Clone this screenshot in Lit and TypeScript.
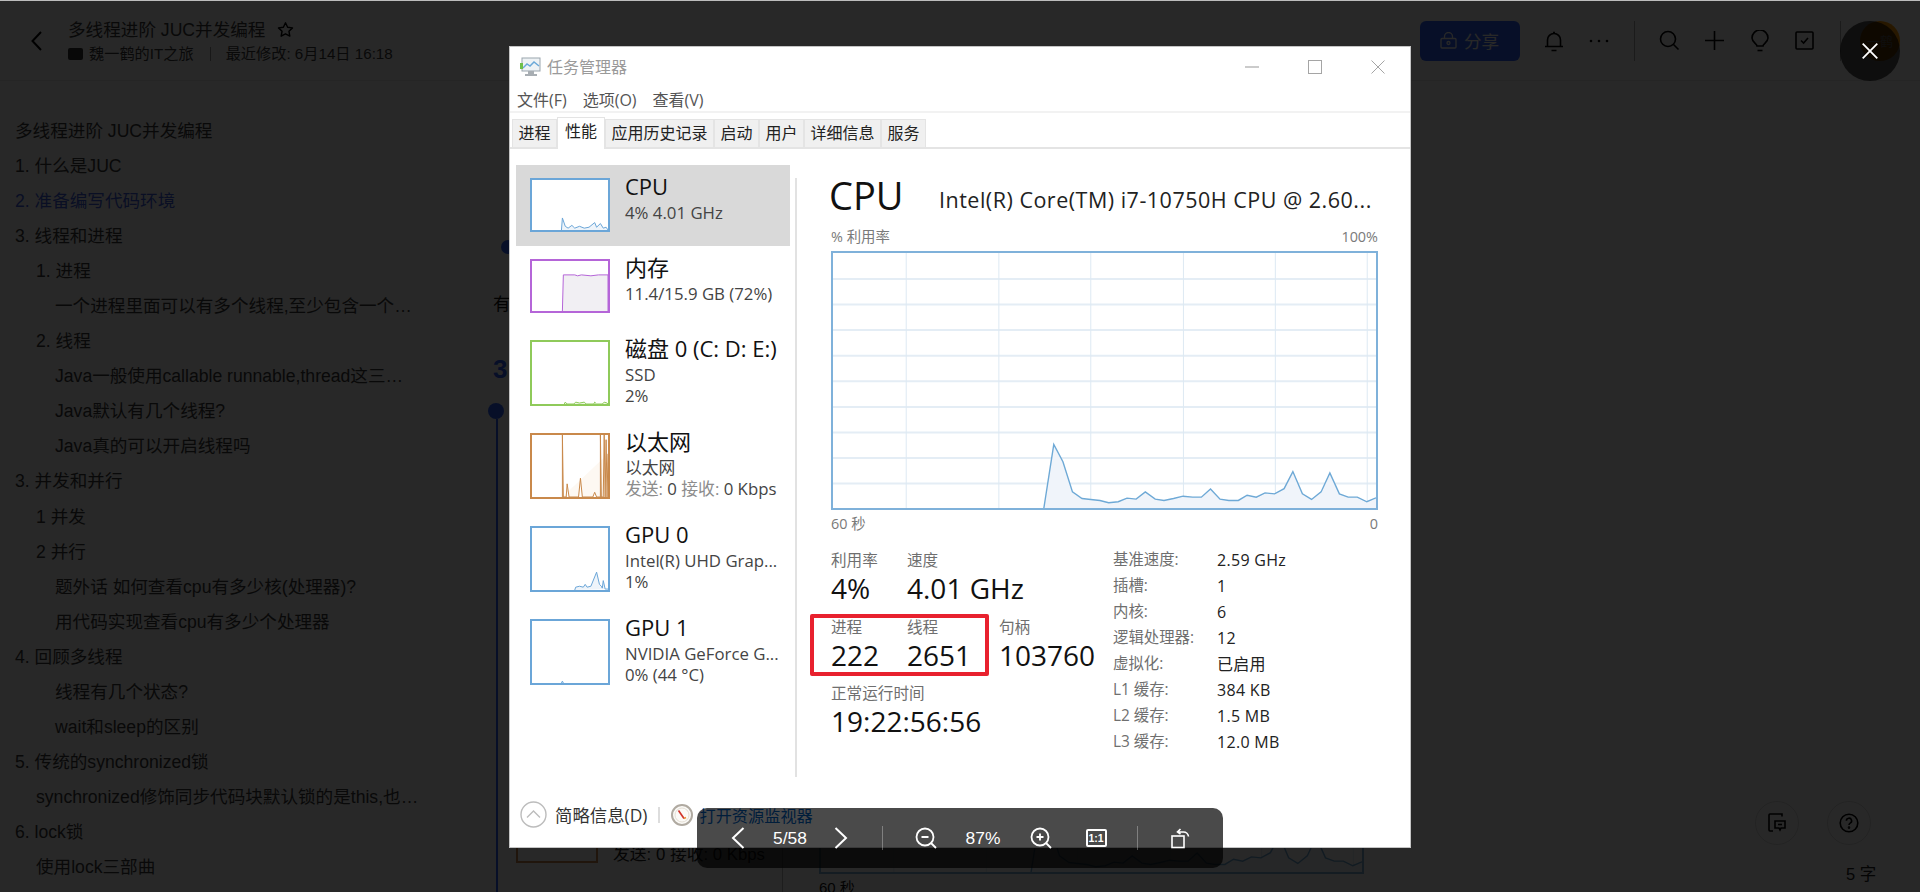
import { LitElement, html, svg, css } from "lit";
import type { TemplateResult } from "lit";
import { customElement } from "lit/decorators.js";

type TocRow = { level: 0 | 1 | 2; text: string; active?: boolean };

const TOC: TocRow[] = [
  { level: 0, text: "多线程进阶 JUC并发编程" },
  { level: 0, text: "1. 什么是JUC" },
  { level: 0, text: "2. 准备编写代码环境", active: true },
  { level: 0, text: "3. 线程和进程" },
  { level: 1, text: "1. 进程" },
  { level: 2, text: "一个进程里面可以有多个线程,至少包含一个线程的说法" },
  { level: 1, text: "2. 线程" },
  { level: 2, text: "Java一般使用callable runnable,thread这三种方式实现" },
  { level: 2, text: "Java默认有几个线程?" },
  { level: 2, text: "Java真的可以开启线程吗" },
  { level: 0, text: "3. 并发和并行" },
  { level: 1, text: "1 并发" },
  { level: 1, text: "2 并行" },
  { level: 2, text: "题外话 如何查看cpu有多少核(处理器)?" },
  { level: 2, text: "用代码实现查看cpu有多少个处理器" },
  { level: 0, text: "4. 回顾多线程" },
  { level: 2, text: "线程有几个状态?" },
  { level: 2, text: "wait和sleep的区别" },
  { level: 0, text: "5. 传统的synchronized锁" },
  { level: 1, text: "synchronized修饰同步代码块默认锁的是this,也就是当前对象实例" },
  { level: 0, text: "6. lock锁" },
  { level: 1, text: "使用lock三部曲" },
];

type Perf = {
  title: string;
  lines: (string | TemplateResult)[];
  color: string;
  fill: string;
  tall: boolean;
  points: string;
  selected?: boolean;
};

const PERF: Perf[] = [
  {
    title: "CPU",
    lines: ["4% 4.01 GHz"],
    color: "#6ba6d8",
    fill: "#eef4fa",
    tall: false,
    points: "31,54 32,41 35,50 38,52 42,49 45,52 50,50 55,52 60,51 66,46 68,51 72,47 75,52 78,51 80,54",
    selected: true,
  },
  {
    title: "内存",
    lines: ["11.4/15.9 GB (72%)"],
    color: "#b565d8",
    fill: "#f1eff3",
    tall: false,
    points: "32,54 33,15 45,15 48,16 52,15 62,16 70,15 80,15 80,54",
  },
  {
    title: "磁盘 0 (C: D: E:)",
    lines: ["SSD", "2%"],
    color: "#8fca5a",
    fill: "#eef7e4",
    tall: true,
    points: "34,66 35,64 37,66 44,66 46,64 50,65 55,64 57,66 65,66 66,64 68,66 74,66 76,64 79,65 80,66",
  },
  {
    title: "以太网",
    lines: ["以太网", html`<span class="dim">发送:</span> 0 <span class="dim">接收:</span> 0 Kbps`],
    color: "#c9894b",
    fill: "#fdf8f2",
    tall: true,
    points: "32,66 32,0 33,66 36,66 37,52 39,66 49,66 51,46 53,66 64,66 66,61 68,66 72,66 72,0 73,66 75,66 76,0 77,66 78,5 79,66 80,20",
  },
  {
    title: "GPU 0",
    lines: ["Intel(R) UHD Grap...", "1%"],
    color: "#6ba6d8",
    fill: "#eef4fa",
    tall: true,
    points: "45,66 46,63 50,62 54,63 56,60 58,63 62,62 68,47 71,60 73,62 74,64 75,56 77,65 80,65",
  },
  {
    title: "GPU 1",
    lines: ["NVIDIA GeForce G...", "0% (44 °C)"],
    color: "#6ba6d8",
    fill: "#eef4fa",
    tall: true,
    points: "31,66 32,64 33,66",
  },
];

const TABS = ["进程", "性能", "应用历史记录", "启动", "用户", "详细信息", "服务"];

const SPECS: [string, string][] = [
  ["基准速度:", "2.59 GHz"],
  ["插槽:", "1"],
  ["内核:", "6"],
  ["逻辑处理器:", "12"],
  ["虚拟化:", "已启用"],
  ["L1 缓存:", "384 KB"],
  ["L2 缓存:", "1.5 MB"],
  ["L3 缓存:", "12.0 MB"],
];

// traced from the big graph, in crop pixels
const CPU_LINE =
  "610,1049 636,855 660,908 685,1000 710,1020 733,1023 757,1026 780,1033 805,1030 828,1019 852,1022 876,1000 902,1022 925,1026 950,1020 975,1013 1000,1016 1023,1016 1047,991 1072,1022 1095,1026 1120,1026 1143,1010 1167,1016 1190,1003 1215,1006 1240,990 1263,938 1288,1006 1312,1023 1337,1000 1360,942 1385,1006 1408,1016 1432,1016 1457,1030 1481,1018";

const H_LINES = [351, 429, 507, 585, 663, 741, 819, 897, 974];
const V_LINES = [249, 492, 733, 976, 1217, 1458];

function cpuGraph() {
  return html`<svg class="graph-svg" viewBox="57 272 1424 777" preserveAspectRatio="none">
    ${H_LINES.map(
      (y) => svg`<line x1="57" x2="1481" y1=${y} y2=${y} stroke="#e4edf5" stroke-width="2" vector-effect="non-scaling-stroke"></line>`
    )}
    ${V_LINES.map(
      (x) => svg`<line x1=${x} x2=${x} y1="272" y2="1049" stroke="#dde9f3" stroke-width="1" vector-effect="non-scaling-stroke"></line>`
    )}
    <polygon points="${CPU_LINE} 1481,1049" fill="#f0f4fa"></polygon>
    <polyline points=${CPU_LINE} fill="none" stroke="#6ea9d6" stroke-width="1.4" vector-effect="non-scaling-stroke"></polyline>
  </svg>`;
}

@customElement("app-root")
export class AppRoot extends LitElement {
  static override styles = css`
    :host {
      display: block;
      position: relative;
      width: 1920px;
      height: 892px;
      overflow: hidden;
      background: #fff;
      font-family: "Liberation Sans", "Noto Sans CJK SC", sans-serif;
      color: #3a3a3a;
    }

    /* page behind the lightbox */
    .page {
      display: flex;
      flex-direction: column;
      height: 892px;
    }
    .header {
      flex: none;
      box-sizing: border-box;
      height: 81px;
      border-bottom: 1px solid #e8e8e8;
      display: flex;
      align-items: center;
      padding: 0 20px 0 31px;
    }
    .back {
      width: 11px;
      height: 20px;
      margin: 2px 26px 0 0;
    }
    .doc-title {
      display: flex;
      align-items: center;
      font-size: 17.6px;
      line-height: 24px;
      gap: 12px;
      margin-top: 1px;
    }
    .doc-meta {
      display: flex;
      align-items: center;
      font-size: 15.2px;
      line-height: 20px;
      margin-top: 2px;
    }
    .folder {
      width: 15px;
      height: 12px;
      background: #333;
      border-radius: 2px;
      margin-right: 6px;
    }
    .meta-sep {
      width: 1px;
      height: 14px;
      background: #999;
      margin: 0 15px 0 16px;
    }
    .head-right {
      margin: 1px 0 0 auto;
      display: flex;
      align-items: center;
    }
    .share {
      width: 100px;
      height: 40px;
      border-radius: 6px;
      background: #2d62ff;
      color: #fff;
      display: flex;
      align-items: center;
      justify-content: center;
      gap: 7px;
      font-size: 17.6px;
      margin-right: 11.5px;
    }
    .ic {
      width: 45px;
      display: flex;
      justify-content: center;
      color: #000;
    }
    .head-sep {
      width: 1px;
      height: 40px;
      background: #aaa;
      margin: 0 12.5px;
    }
    .avatar {
      width: 40px;
      height: 40px;
      border-radius: 50%;
      background: #ff9a00;
      margin-left: 7px;
      color: #fff;
      font-size: 13px;
      display: flex;
      align-items: center;
      justify-content: center;
    }

    .body {
      flex: 1;
      min-height: 0;
      display: flex;
    }
    .toc {
      flex: none;
      width: 487px;
      box-sizing: border-box;
      padding-top: 33px;
    }
    .toc-row {
      width: 419px;
      box-sizing: border-box;
      height: 35.05px;
      line-height: 35px;
      font-size: 17.6px;
      white-space: nowrap;
      overflow: hidden;
      text-overflow: ellipsis;
    }
    .l0 {
      padding-left: 15px;
    }
    .l1 {
      padding-left: 36px;
    }
    .l2 {
      padding-left: 55px;
    }
    .toc-row.active {
      color: #3f63e6;
    }

    .doc {
      flex: 1;
      min-width: 0;
      display: flex;
      flex-direction: column;
      padding-left: 6px;
    }
    .dot-small {
      width: 14px;
      height: 14px;
      margin: 159px 0 0 8px;
      border-radius: 50%;
      background: #2d62ff;
    }
    .para {
      font-size: 17.6px;
      line-height: 24px;
      margin-top: 38px;
      color: #111;
    }
    .h3 {
      font-size: 26px;
      font-weight: 700;
      line-height: 30px;
      margin-top: 38px;
      color: #2d62ff;
    }
    .dot-big {
      width: 16px;
      height: 16px;
      border-radius: 50%;
      background: #2d62ff;
      margin: 19px 0 0 -5px;
    }
    .timeline {
      flex: 1;
      min-height: 0;
      display: flex;
      margin-left: 3px;
    }
    .rail {
      flex: none;
      width: 2px;
      background: #2d62ff;
    }
    .figure {
      display: flex;
      align-items: flex-end;
      margin-left: 18px;
      color: #111;
    }
    .fig-thumb {
      flex: none;
      box-sizing: border-box;
      width: 82px;
      height: 60px;
      border: 2px solid #c9894b;
      margin-bottom: 29px;
    }
    .fig-text {
      flex: none;
      width: 154px;
      margin: 0 0 27px 15px;
      font-size: 16.8px;
      line-height: 20px;
      white-space: nowrap;
      color: #222;
    }
    .fig-sep {
      flex: none;
      width: 1px;
      height: 280px;
      margin-left: 15px;
      background: #bbb;
    }
    .fig-chart {
      flex: none;
      width: 545px;
      margin: 0 0 -5px 36px;
    }
    .fig-chart .graph {
      height: 259px;
    }
    .fig-axis {
      font-size: 15px;
      line-height: 18px;
      margin-top: 5px;
    }

    .fab {
      position: absolute;
      top: 801px;
      width: 44px;
      height: 44px;
      box-sizing: border-box;
      border-radius: 50%;
      border: 1px solid #ddd;
      display: flex;
      align-items: center;
      justify-content: center;
      color: #000;
    }
    .fab.a {
      left: 1755px;
    }
    .fab.b {
      left: 1827px;
    }
    .word-count {
      position: absolute;
      left: 1846px;
      top: 864px;
      font-size: 16.5px;
      line-height: 20px;
      color: #222;
    }

    /* lightbox */
    .mask {
      position: absolute;
      inset: 0;
      background: rgba(0, 0, 0, 0.843);
      display: flex;
      align-items: center;
      justify-content: center;
      padding-top: 2px;
      box-sizing: border-box;
    }
    .edge {
      position: absolute;
      left: 0;
      right: 0;
      top: 0;
      height: 1px;
      background: #bdbdbd;
    }
    .close {
      position: absolute;
      left: 1840px;
      top: 21px;
      width: 60px;
      height: 60px;
      border-radius: 50%;
      background: rgba(0, 0, 0, 0.65);
      display: flex;
      align-items: center;
      justify-content: center;
    }

    .toolbar {
      position: absolute;
      left: 697px;
      top: 808px;
      width: 526px;
      height: 60px;
      box-sizing: border-box;
      padding-left: 21px;
      border-radius: 10px;
      background: rgba(0, 0, 0, 0.71);
      color: #fff;
      display: flex;
      align-items: center;
      font-size: 17.4px;
    }
    .t {
      flex: none;
      display: flex;
      align-items: center;
      justify-content: center;
    }
    .t40 {
      width: 40px;
    }
    .t64 {
      width: 64px;
    }
    .t38 {
      width: 38px;
    }
    .t44 {
      width: 44px;
    }
    .t70 {
      width: 70px;
    }
    .t46 {
      width: 46px;
    }
    .t-sep {
      flex: none;
      width: 1px;
      height: 24px;
      background: rgba(255, 255, 255, 0.3);
      margin: 0 21px 0 22px;
    }
    .t-sep.b {
      margin: 0 21px 0 9px;
    }
    .one-one {
      box-sizing: border-box;
      width: 21px;
      height: 18px;
      border: 2px solid #fff;
      border-radius: 2px;
      font-size: 10.5px;
      font-weight: 700;
      line-height: 14px;
      text-align: center;
    }

    /* task manager screenshot */
    .win {
      flex: none;
      box-sizing: border-box;
      width: 902px;
      height: 802px;
      border: 1px solid #c4c4c4;
      background: #fff;
      display: flex;
      flex-direction: column;
      font-family: "Open Sans", "Noto Sans CJK SC", sans-serif;
      color: #222;
      font-size: 16px;
    }
    .titlebar {
      flex: none;
      height: 39px;
      display: flex;
      align-items: center;
      padding-left: 10px;
      gap: 6px;
      color: #9a9a9a;
      line-height: 20px;
    }
    .win-ctl {
      margin-left: auto;
      display: flex;
      margin-right: 1px;
    }
    .win-ctl div {
      width: 63px;
      display: flex;
      justify-content: center;
      align-items: center;
    }
    .menu {
      flex: none;
      height: 27px;
      box-sizing: border-box;
      border-bottom: 2px solid #f2f2f2;
      display: flex;
      gap: 16px;
      padding: 1px 0 0 7px;
      line-height: 26px;
      font-size: 16px;
      color: #555;
    }
    .tabs {
      flex: none;
      height: 36px;
      box-sizing: border-box;
      border-bottom: 2px solid #e4e4e4;
      display: flex;
      align-items: flex-end;
      padding-left: 2px;
    }
    .tab {
      height: 27px;
      line-height: 27px;
      padding: 0 5.5px;
      background: #f0f0f0;
      border: 1px solid #e4e4e4;
      border-bottom: none;
      white-space: nowrap;
      font-size: 16px;
    }
    .tab.on {
      height: 31px;
      background: #fff;
      margin-bottom: -2px;
      padding: 0 7px;
    }
    .main {
      flex: 1;
      min-height: 0;
      display: flex;
    }
    .list {
      flex: none;
      width: 285px;
      box-sizing: border-box;
      padding: 16px 5px 0 6px;
    }
    .item {
      display: flex;
      gap: 15px;
      padding: 13px 0 14px 14px;
    }
    .item.sel {
      background: #d9d9d9;
    }
    .thumb {
      flex: none;
      box-sizing: border-box;
      width: 80px;
      height: 54px;
      border: 2px solid;
      background: #fff;
    }
    .thumb.tall {
      height: 66px;
    }
    .thumb svg {
      display: block;
      width: 100%;
      height: 100%;
    }
    .item-text {
      margin-top: -3px;
      white-space: nowrap;
      min-width: 0;
    }
    .item-title {
      font-size: 22px;
      line-height: 22px;
      margin-bottom: 5px;
      color: #111;
    }
    .item-sub {
      font-size: 16.8px;
      line-height: 21px;
      color: #444;
    }
    .dim {
      color: #8c8c8c;
    }
    .list-sep {
      flex: none;
      width: 2px;
      margin: 29px 0 5px;
      background: #e2e2e2;
    }
    .panel {
      flex: 1;
      min-width: 0;
      box-sizing: border-box;
      padding: 21px 32px 0 34px;
    }
    .head-row {
      display: flex;
      height: 50px;
      white-space: nowrap;
    }
    .cpu {
      font-size: 38px;
      line-height: 50px;
      width: 110px;
      margin-left: -2px;
      color: #111;
    }
    .model {
      font-size: 21.5px;
      letter-spacing: 0.5px;
      line-height: 50px;
      margin-top: 5px;
      color: #222;
    }
    .axis {
      display: flex;
      justify-content: space-between;
      font-size: 14.4px;
      line-height: 20px;
      color: #7a7a7a;
    }
    .axis.top {
      margin-top: 7px;
    }
    .axis.bottom {
      margin-top: 4px;
    }
    .graph {
      box-sizing: border-box;
      height: 259px;
      margin-top: 4px;
      border: 2px solid #7fb1da;
      background: #fff;
    }
    .graph-svg {
      display: block;
      width: 100%;
      height: 100%;
    }
    .stats {
      display: flex;
      margin-top: 16px;
    }
    .stats-left {
      position: relative;
      flex: none;
      width: 282px;
    }
    .s-row {
      display: flex;
      margin-bottom: 10.5px;
    }
    .c76 {
      width: 76px;
    }
    .c92 {
      width: 92px;
    }
    .s-label {
      font-size: 15.6px;
      line-height: 20px;
      color: #6f6f6f;
      white-space: nowrap;
    }
    .s-value {
      font-size: 28px;
      line-height: 36px;
      color: #111;
      white-space: nowrap;
    }
    .redbox {
      position: absolute;
      left: -21px;
      top: 64px;
      width: 179px;
      height: 62px;
      box-sizing: border-box;
      border: 4px solid #e8212e;
      border-radius: 2px;
    }
    .specs {
      display: grid;
      grid-template-columns: 104px auto;
      grid-auto-rows: 26px;
      line-height: 26px;
      margin-top: -3px;
      font-size: 15.4px;
      white-space: nowrap;
    }
    .specs .k {
      color: #6f6f6f;
    }
    .specs .v {
      color: #222;
      font-size: 16px;
      letter-spacing: 0.3px;
    }
    .foot {
      flex: none;
      height: 65px;
      display: flex;
      align-items: center;
      padding-left: 10px;
    }
    .foot-label {
      font-size: 17.4px;
      margin-left: 8px;
      color: #333;
      white-space: nowrap;
    }
    .foot-sep {
      width: 2px;
      height: 16px;
      background: #ddd;
      margin: 0 11px;
    }
    .foot-link {
      font-size: 16.2px;
      margin-left: 6px;
      color: #0066cc;
      white-space: nowrap;
    }
  `;

  private renderThumb(p: Perf) {
    const h = p.tall ? 66 : 54;
    return html`<div class="thumb ${p.tall ? "tall" : ""}" style="border-color:${p.color}">
      <svg viewBox="0 0 80 ${h}" preserveAspectRatio="none">
        <polygon points=${p.points} fill=${p.fill}></polygon>
        <polyline points=${p.points} fill="none" stroke=${p.color} stroke-width="1" vector-effect="non-scaling-stroke"></polyline>
      </svg>
    </div>`;
  }

  private renderHeader() {
    return html`<div class="header">
      <svg class="back" viewBox="0 0 11 20" fill="none" stroke="#000" stroke-width="2"><path d="M10 1 1.5 10 10 19" /></svg>
      <div>
        <div class="doc-title">
          多线程进阶 JUC并发编程
          <svg width="17" height="17" viewBox="0 0 24 24" fill="none" stroke="#000" stroke-width="2" stroke-linejoin="round"><path d="M12 2.5l3 6.3 6.9.9-5 4.8 1.2 6.9-6.1-3.3-6.1 3.3 1.2-6.9-5-4.8 6.9-.9z" /></svg>
        </div>
        <div class="doc-meta">
          <div class="folder"></div>
          魏一鹤的IT之旅
          <div class="meta-sep"></div>
          最近修改: 6月14日 16:18
        </div>
      </div>
      <div class="head-right">
        <div class="share">
          <svg width="17" height="17" viewBox="0 0 17 17" fill="none" stroke="#fff" stroke-width="1.3"><rect x="1" y="6.5" width="15" height="9.5" rx="1" /><path d="M4.5 6.5V4.5a4 4 0 0 1 8 0v2" /><circle cx="8.5" cy="11" r="1.5" /></svg>
          分享
        </div>
        <div class="ic"><svg width="22" height="22" viewBox="0 0 22 22" fill="none" stroke="currentColor" stroke-width="1.6"><path d="M2 16.5h18M4.5 16.5V10a6.5 6.5 0 0 1 13 0v6.5M8.5 20.5h5" /><path d="M10 2.5h2" /></svg></div>
        <div class="ic"><svg width="20" height="4" viewBox="0 0 20 4" fill="currentColor"><circle cx="2" cy="2" r="1.3" /><circle cx="10" cy="2" r="1.3" /><circle cx="18" cy="2" r="1.3" /></svg></div>
        <div class="head-sep"></div>
        <div class="ic"><svg width="21" height="21" viewBox="0 0 21 21" fill="none" stroke="currentColor" stroke-width="1.6"><circle cx="9" cy="9" r="7.5" /><path d="M14.5 14.5l5 5" /></svg></div>
        <div class="ic"><svg width="19" height="19" viewBox="0 0 19 19" fill="none" stroke="currentColor" stroke-width="1.6"><path d="M9.5 0v19M0 9.5h19" /></svg></div>
        <div class="ic"><svg width="18" height="22" viewBox="0 0 18 22" fill="none" stroke="currentColor" stroke-width="1.6"><path d="M6 16c0-2-5-4-5-8a8 8 0 0 1 16 0c0 4-5 6-5 8z" /><path d="M6.5 20.5h5" /></svg></div>
        <div class="ic"><svg width="19" height="19" viewBox="0 0 19 19" fill="none" stroke="currentColor" stroke-width="1.6"><rect x="1" y="1" width="17" height="17" rx="1" /><path d="M6 9.5l2.6 2.6L13 7" /></svg></div>
        <div class="head-sep"></div>
        <div class="avatar">一鹤</div>
      </div>
    </div>`;
  }

  private renderDoc() {
    return html`<div class="doc">
      <div class="dot-small"></div>
      <div class="para">有</div>
      <div class="h3">3</div>
      <div class="dot-big"></div>
      <div class="timeline">
        <div class="rail"></div>
        <div class="figure">
          <div class="fig-thumb"></div>
          <div class="fig-text">发送: 0 接收: 0 Kbps</div>
          <div class="fig-sep"></div>
          <div class="fig-chart">
            <div class="graph">${cpuGraph()}</div>
            <div class="fig-axis">60 秒</div>
          </div>
        </div>
      </div>
    </div>`;
  }

  private renderWindow() {
    return html`<div class="win">
      <div class="titlebar">
        <svg width="21" height="20" viewBox="0 0 21 20">
          <rect x="2" y="1" width="18" height="13" fill="#eef2f5" stroke="#9aa5ad" />
          <path d="M3 11l4-4 3 2 4-4 5 4" fill="none" stroke="#6aa8d8" stroke-width="1.4" />
          <rect x="0" y="6" width="3" height="6" fill="#6fbf4a" />
          <path d="M8 14h6v3h3v2H5v-2h3z" fill="#a8aeb3" />
        </svg>
        任务管理器
        <div class="win-ctl">
          <div><svg width="14" height="14" viewBox="0 0 14 14"><path d="M0 7h14" stroke="#b5b5b5" stroke-width="1.4" /></svg></div>
          <div><svg width="14" height="14" viewBox="0 0 14 14"><rect x=".5" y=".5" width="13" height="13" fill="none" stroke="#a5a5a5" /></svg></div>
          <div><svg width="14" height="14" viewBox="0 0 14 14"><path d="M.5.5l13 13M13.5.5l-13 13" stroke="#a5a5a5" /></svg></div>
        </div>
      </div>
      <div class="menu"><span>文件(F)</span><span>选项(O)</span><span>查看(V)</span></div>
      <div class="tabs">
        ${TABS.map((t, i) => html`<div class="tab ${i === 1 ? "on" : ""}">${t}</div>`)}
      </div>
      <div class="main">
        <div class="list">
          ${PERF.map(
            (p) => html`<div class="item ${p.selected ? "sel" : ""}">
              ${this.renderThumb(p)}
              <div class="item-text">
                <div class="item-title">${p.title}</div>
                ${p.lines.map((l) => html`<div class="item-sub">${l}</div>`)}
              </div>
            </div>`
          )}
        </div>
        <div class="list-sep"></div>
        <div class="panel">
          <div class="head-row">
            <div class="cpu">CPU</div>
            <div class="model">Intel(R) Core(TM) i7-10750H CPU @ 2.60...</div>
          </div>
          <div class="axis top"><span>% 利用率</span><span>100%</span></div>
          <div class="graph">${cpuGraph()}</div>
          <div class="axis bottom"><span>60 秒</span><span>0</span></div>
          <div class="stats">
            <div class="stats-left">
              <div class="s-row">
                <div class="c76"><div class="s-label">利用率</div><div class="s-value">4%</div></div>
                <div class="c92"><div class="s-label">速度</div><div class="s-value">4.01 GHz</div></div>
              </div>
              <div class="s-row">
                <div class="c76"><div class="s-label">进程</div><div class="s-value">222</div></div>
                <div class="c92"><div class="s-label">线程</div><div class="s-value">2651</div></div>
                <div><div class="s-label">句柄</div><div class="s-value">103760</div></div>
              </div>
              <div class="s-row">
                <div><div class="s-label">正常运行时间</div><div class="s-value">19:22:56:56</div></div>
              </div>
              <div class="redbox"></div>
            </div>
            <div class="specs">
              ${SPECS.map(([k, v]) => html`<div class="k">${k}</div><div class="v">${v}</div>`)}
            </div>
          </div>
        </div>
      </div>
      <div class="foot">
        <svg width="27" height="27" viewBox="0 0 27 27" fill="none" stroke="#bcbcbc" stroke-width="1.4"><circle cx="13.5" cy="13.5" r="12.5" /><path d="M7 16.5l6.5-6.5 6.5 6.5" /></svg>
        <span class="foot-label">简略信息(D)</span>
        <div class="foot-sep"></div>
        <svg width="22" height="22" viewBox="0 0 22 22">
          <circle cx="11" cy="11" r="10" fill="#fbfaf7" stroke="#b0aaa1" stroke-width="2" />
          <circle cx="11" cy="11" r="7" fill="none" stroke="#e4ded4" />
          <path d="M7.5 6.5l5.5 8" stroke="#d1352b" stroke-width="1.6" />
          <path d="M13 14.5l2-1" stroke="#e8963a" stroke-width="1.4" />
        </svg>
        <span class="foot-link">打开资源监视器</span>
      </div>
    </div>`;
  }

  private renderToolbar() {
    return html`<div class="toolbar">
      <div class="t t40"><svg width="14" height="24" viewBox="0 0 14 24" fill="none" stroke="#fff" stroke-width="2"><path d="M12.5 2 2 12l10.5 10" /></svg></div>
      <div class="t t64">5/58</div>
      <div class="t t38"><svg width="14" height="24" viewBox="0 0 14 24" fill="none" stroke="#fff" stroke-width="2"><path d="M1.5 2 12 12 1.5 22" /></svg></div>
      <div class="t-sep"></div>
      <div class="t t44"><svg width="22" height="22" viewBox="0 0 22 22" fill="none" stroke="#fff" stroke-width="1.8"><circle cx="10" cy="10" r="8.5" /><path d="M6.5 10h7M16 16l5 5" /></svg></div>
      <div class="t t70">87%</div>
      <div class="t t46"><svg width="22" height="22" viewBox="0 0 22 22" fill="none" stroke="#fff" stroke-width="1.8"><circle cx="10" cy="10" r="8.5" /><path d="M6.5 10h7M10 6.5v7M16 16l5 5" /></svg></div>
      <div class="t t64"><div class="one-one">1:1</div></div>
      <div class="t-sep b"></div>
      <div class="t t44"><svg width="20" height="22" viewBox="0 0 20 22" fill="none" stroke="#fff" stroke-width="1.6"><rect x="1" y="9" width="12" height="11.5" /><path d="M6.5 5h6a5 5 0 0 1 5 4.5M9.5 2 6.5 5l3 2" /></svg></div>
    </div>`;
  }

  override render() {
    return html`
      <div class="page">
        ${this.renderHeader()}
        <div class="body">
          <div class="toc">
            ${TOC.map(
              (r) => html`<div class="toc-row l${r.level} ${r.active ? "active" : ""}">${r.text}</div>`
            )}
          </div>
          ${this.renderDoc()}
        </div>
      </div>
      <div class="fab a">
        <svg width="18" height="20" viewBox="0 0 18 20" fill="none" stroke="#000" stroke-width="1.6"><path d="M14 3.5V1H2a1 1 0 0 0-1 1v15a1 1 0 0 0 1 1h3" /><path d="M7 8h10v7h-4l-1 2-1-2H7z" /><path d="M10 11.5h4" /></svg>
      </div>
      <div class="fab b">
        <svg width="20" height="20" viewBox="0 0 20 20" fill="none" stroke="#000" stroke-width="1.6"><circle cx="10" cy="10" r="8.8" /><path d="M7.4 7.8a2.6 2.6 0 1 1 3.8 2.3c-.8.5-1.2 1-1.2 2" /><circle cx="10" cy="14.6" r=".5" /></svg>
      </div>
      <div class="word-count">5 字</div>
      <div class="mask">${this.renderWindow()}</div>
      <div class="edge"></div>
      <div class="close">
        <svg width="16" height="16" viewBox="0 0 16 16" fill="none" stroke="#fff" stroke-width="1.8"><path d="M.7.7l14.6 14.6M15.3.7.7 15.3" /></svg>
      </div>
      ${this.renderToolbar()}
    `;
  }
}
